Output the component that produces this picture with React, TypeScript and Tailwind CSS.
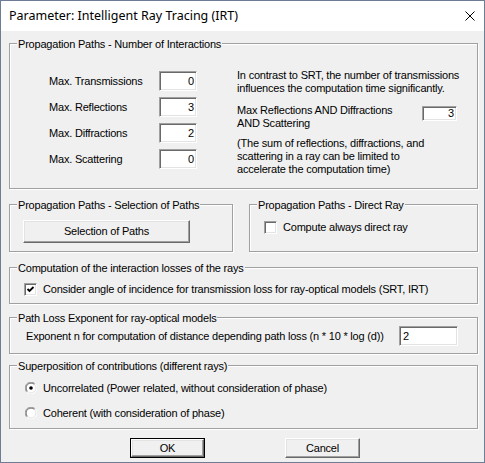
import React from "react";

const body = "font-['Liberation_Sans',Arial,sans-serif] text-[11px] leading-[13px] text-black tracking-[-0.2px]";

function Group({ label, className, children }: { label: string; className: string; children?: React.ReactNode }) {
  return (
    <div className={"relative border border-[#a0a0a0] shadow-[inset_1px_1px_0_#fff,1px_1px_0_#fff] " + className}>
      <span className="absolute -top-[6px] left-[7px] bg-[#f0f0f0] px-[1px] whitespace-nowrap">{label}</span>
      {children}
    </div>
  );
}

function Edit({ value, className, align }: { value: string; className: string; align: "left" | "right" }) {
  return (
    <div
      className={
        "flex items-center bg-white border border-t-[#a0a0a0] border-l-[#a0a0a0] border-r-white border-b-white shadow-[inset_1px_1px_0_#696969,inset_-1px_-1px_0_#e3e3e3] " +
        (align === "right" ? "justify-end pr-[2px] " : "justify-start pl-[3px] ") +
        className
      }
    >
      {value}
    </div>
  );
}

function Check({ checked }: { checked: boolean }) {
  return (
    <div className="relative w-[13px] h-[13px] shrink-0 bg-white border border-t-[#a0a0a0] border-l-[#a0a0a0] border-r-white border-b-white shadow-[inset_1px_1px_0_#696969,inset_-1px_-1px_0_#e3e3e3]">
      {checked && (
        <svg width="11" height="11" viewBox="0 0 11 11" className="absolute left-0 top-0">
          <path d="M2.5 5 L4.5 7 L8.5 3" stroke="#000" strokeWidth="1.8" fill="none" />
        </svg>
      )}
    </div>
  );
}

function Radio({ checked }: { checked: boolean }) {
  return (
    <svg width="12" height="12" viewBox="0 0 12 12" className="shrink-0">
      <circle cx="6" cy="6" r="5.5" fill="#fff" />
      <path d="M1.8 10.2 A5.5 5.5 0 0 1 10.2 1.8" stroke="#a0a0a0" strokeWidth="1" fill="none" />
      <path d="M10.2 1.8 A5.5 5.5 0 0 1 1.8 10.2" stroke="#ffffff" strokeWidth="1" fill="none" />
      <path d="M2.5 9.5 A4.5 4.5 0 0 1 9.5 2.5" stroke="#696969" strokeWidth="1" fill="none" />
      <path d="M9.5 2.5 A4.5 4.5 0 0 1 2.5 9.5" stroke="#e3e3e3" strokeWidth="1" fill="none" />
      {checked && <circle cx="6" cy="6" r="1.8" fill="#000" />}
    </svg>
  );
}

function Button({ label, className, def }: { label: string; className: string; def?: boolean }) {
  const inner = (
    <div className="flex-1 flex items-center justify-center bg-[#f0f0f0] border border-t-white border-l-white border-r-[#696969] border-b-[#696969] shadow-[inset_-1px_-1px_0_#a0a0a0,inset_1px_1px_0_#e3e3e3]">
      {label}
    </div>
  );
  if (def) {
    return <div className={"flex border border-black " + className}>{inner}</div>;
  }
  return <div className={"flex " + className}>{inner}</div>;
}

export default function App() {
  return (
    <div className={"w-[485px] h-[463px] flex flex-col border border-[#6d7d93] bg-[#f0f0f0] " + body}>
      <div className="h-[30px] bg-white flex items-center pl-[8px] shrink-0">
        <span className="font-['Noto_Sans',sans-serif] text-[12.5px] leading-[16px] tracking-normal">Parameter: Intelligent Ray Tracing (IRT)</span>
        <svg width="10" height="10" viewBox="0 0 10 10" className="ml-auto mr-[9px]">
          <path d="M0.5 0.5 L9.5 9.5 M9.5 0.5 L0.5 9.5" stroke="#000" strokeWidth="1" />
        </svg>
      </div>
      <div className="flex flex-col pl-[8px]">
        <Group label="Propagation Paths - Number of Interactions" className="mt-[12px] h-[146px] w-[469px] flex">
          <div className="w-[227px] pl-[39px] pt-[27px] flex flex-col gap-[6px]">
            {[
              ["Max. Transmissions", "0"],
              ["Max. Reflections", "3"],
              ["Max. Diffractions", "2"],
              ["Max. Scattering", "0"],
            ].map(([l, v]) => (
              <div key={l} className="flex items-center h-[20px]">
                <span className="w-[110px]">{l}</span>
                <Edit value={v} align="right" className="w-[38px] h-[20px]" />
              </div>
            ))}
          </div>
          <div className="flex-1 pt-[25px] flex flex-col">
            <p>
              In contrast to SRT, the number of transmissions
              <br />
              influences the computation time significantly.
            </p>
            <div className="flex mt-[9px]">
              <p className="w-[185px]">
                Max Reflections AND Diffractions
                <br />
                AND Scattering
              </p>
              <Edit value="3" align="right" className="w-[35px] h-[15px] mt-[2px]" />
            </div>
            <p className="mt-[7px]">
              (The sum of reflections, diffractions, and
              <br />
              scattering in a ray can be limited to
              <br />
              accelerate the computation time)
            </p>
          </div>
        </Group>
        <div className="flex mt-[15px]">
          <Group label="Propagation Paths - Selection of Paths" className="h-[48px] w-[224px] pl-[13px] pt-[15px]">
            <Button label="Selection of Paths" className="w-[167px] h-[23px]" />
          </Group>
          <Group label="Propagation Paths - Direct Ray" className="ml-[16px] h-[48px] w-[229px] pl-[14px] pt-[16px]">
            <div className="flex items-center gap-[6px]">
              <Check checked={false} />
              <span>Compute always direct ray</span>
            </div>
          </Group>
        </div>
        <Group label="Computation of the interaction losses of the rays" className="mt-[15px] h-[37px] w-[469px] pl-[14px] pt-[15px]">
          <div className="flex items-center gap-[6px]">
            <Check checked={true} />
            <span className="whitespace-nowrap">Consider angle of incidence for transmission loss for ray-optical models (SRT, IRT)</span>
          </div>
        </Group>
        <Group label="Path Loss Exponent for ray-optical models" className="mt-[13px] h-[37px] w-[469px] pl-[16px] pt-[8px]">
          <div className="flex items-center">
            <span className="w-[373px] whitespace-nowrap">Exponent n for computation of distance depending path loss (n * 10 * log (d))</span>
            <Edit value="2" align="left" className="w-[59px] h-[20px]" />
          </div>
        </Group>
        <Group label="Superposition of contributions (different rays)" className="mt-[11px] h-[64px] w-[469px] pl-[15px] pt-[16px]">
          <div className="flex flex-col gap-[13px]">
            <div className="flex items-center gap-[6px] h-[12px]">
              <Radio checked={true} />
              <span>Uncorrelated (Power related, without consideration of phase)</span>
            </div>
            <div className="flex items-center gap-[6px] h-[12px]">
              <Radio checked={false} />
              <span>Coherent (with consideration of phase)</span>
            </div>
          </div>
        </Group>
        <div className="flex mt-[9px] pl-[121px]">
          <Button label="OK" def className="w-[75px] h-[20px]" />
          <Button label="Cancel" className="ml-[80px] w-[75px] h-[20px]" />
        </div>
      </div>
    </div>
  );
}
